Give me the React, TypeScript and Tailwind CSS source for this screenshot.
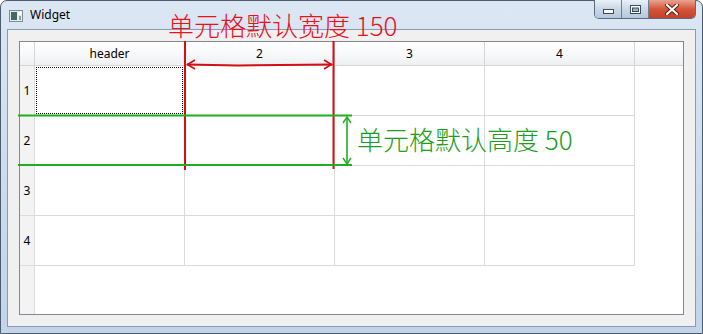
import React from 'react';

const COLS = ['header', '2', '3', '4'];
const ROWS = [1, 2, 3, 4];

const CJK = { fontFamily: '"Noto Sans CJK SC", "Noto Sans", sans-serif' };
const UI = { fontFamily: '"Noto Sans", "DejaVu Sans", sans-serif' };

function TitleIcon() {
  return (
    <svg width="14" height="12" viewBox="0 0 14 12" className="mt-[9px] ml-[8px]">
      <rect x="0.5" y="0.5" width="13" height="11" fill="#e9edf0" stroke="#7d8a96" />
      <rect x="2" y="2" width="6" height="8" fill="#3f6b60" />
      <rect x="9" y="2" width="3" height="3" fill="#ffffff" />
      <rect x="10" y="6" width="2" height="4" fill="#8fa19a" />
    </svg>
  );
}

function CaptionButtons() {
  return (
    <div className="ml-auto mr-[6px] flex h-[19px] -mt-[1px] rounded-b-[5px] border border-t-0 border-[#5a6a80] overflow-hidden">
      <div className="w-[27px] flex items-center justify-center bg-gradient-to-b from-[#eaf1f8] via-[#c9d7e6] to-[#b6c8dd] border-r border-[#6f7f93]">
        <svg width="11" height="5" viewBox="0 0 11 5" className="mt-[5px]">
          <rect x="0.5" y="0.5" width="10" height="4" fill="#ffffff" stroke="#3c4a5c" />
        </svg>
      </div>
      <div className="w-[27px] flex items-center justify-center bg-gradient-to-b from-[#eaf1f8] via-[#c9d7e6] to-[#b6c8dd] border-r border-[#6f7f93]">
        <svg width="11" height="9" viewBox="0 0 11 9">
          <rect x="0.5" y="0.5" width="10" height="8" fill="#ffffff" stroke="#3c4a5c" />
          <rect x="2.5" y="3" width="6" height="3.5" fill="#9fb2c8" stroke="#3c4a5c" />
        </svg>
      </div>
      <div className="w-[46px] flex items-center justify-center bg-gradient-to-b from-[#e9a391] via-[#d4553c] to-[#c63f27]">
        <svg width="14" height="11" viewBox="0 0 14 11">
          <path d="M2 1 L12 10 M12 1 L2 10" stroke="#5a1a10" strokeWidth="4" strokeLinecap="round" />
          <path d="M2 1 L12 10 M12 1 L2 10" stroke="#ffffff" strokeWidth="2.2" strokeLinecap="round" />
        </svg>
      </div>
    </div>
  );
}

function Table() {
  return (
    <div className="flex-1 flex flex-col border border-[#828790] bg-white overflow-hidden text-[12px] text-black" style={UI}>
      {/* column header */}
      <div className="flex h-[24px] shrink-0 bg-gradient-to-b from-white via-[#f8f9fa] to-[#eef0f2] border-b border-[#d5d5d5]">
        <div className="w-[15px] shrink-0 border-r border-[#d5d5d5]" />
        {COLS.map((c) => (
          <div key={c} className="w-[150px] shrink-0 border-r border-[#d5d5d5] flex items-center justify-center">
            {c}
          </div>
        ))}
        <div className="flex-1" />
      </div>

      <div className="flex flex-1">
        {/* row header */}
        <div className="w-[15px] shrink-0 bg-[#f3f3f3] border-r border-[#dcdcdc] flex flex-col">
          {ROWS.map((r) => (
            <div key={r} className="h-[50px] shrink-0 border-b border-[#dcdcdc] flex items-center justify-center">
              {r}
            </div>
          ))}
        </div>

        {/* cells */}
        <div className="flex flex-col">
          {ROWS.map((r) => (
            <div key={r} className="flex">
              {COLS.map((c, i) => (
                <div key={c} className="w-[150px] h-[50px] shrink-0 border-r border-b border-[#dadada] p-[1px]">
                  {r === 1 && i === 0 && <div className="h-full border border-dotted border-black" />}
                </div>
              ))}
            </div>
          ))}
        </div>
      </div>
    </div>
  );
}

function Annotations() {
  const red = '#d20f14';
  const green = '#1fae1f';
  return (
    <div className="absolute inset-0 pointer-events-none">
      <svg width="703" height="334" className="absolute inset-0">
        {/* width marks */}
        <path d="M185 41 L185 170" stroke={red} strokeWidth="2" />
        <path d="M333.5 41 L333.5 169" stroke={red} strokeWidth="2" />
        <path d="M187 64.5 L238 65.5 L332 64.5" stroke={red} strokeWidth="2" fill="none" />
        <path d="M195 60 L187.5 64.5 L195 69" stroke={red} strokeWidth="1.6" fill="none" />
        <path d="M324 60 L331.5 64.5 L324 69" stroke={red} strokeWidth="1.6" fill="none" />
        {/* height marks */}
        <path d="M18 115.5 L352 115.5" stroke={green} strokeWidth="2" />
        <path d="M18 165 L352 165" stroke={green} strokeWidth="2" />
        <path d="M347 117 L347 164" stroke={green} strokeWidth="1.6" />
        <path d="M343 123 L347 117 L351 123" stroke={green} strokeWidth="1.4" fill="none" />
        <path d="M343 158 L347 164 L351 158" stroke={green} strokeWidth="1.4" fill="none" />
      </svg>
      <span className="absolute left-[168px] top-[12px] text-[26px] leading-none font-light text-[#e8121a] whitespace-nowrap" style={CJK}>
        单元格默认宽度 150
      </span>
      <span className="absolute left-[357px] top-[126px] text-[26px] leading-none font-light text-[#1c9e1c] whitespace-nowrap" style={CJK}>
        单元格默认高度 50
      </span>
    </div>
  );
}

export default function App() {
  return (
    <div className="relative w-[703px] h-[334px] overflow-hidden bg-white">
      <div className="w-full h-full flex flex-col rounded-t-[7px] border border-[#4c5b6e] bg-gradient-to-b from-[#dce7f4] via-[#cddcee] to-[#c2d4ea]">
        {/* title bar */}
        <div className="h-[28px] shrink-0 flex items-start">
          <TitleIcon />
          <span className="ml-[7px] mt-[6px] text-[12px] leading-[16px] text-black" style={UI}>
            Widget
          </span>
          <CaptionButtons />
        </div>

        {/* client area */}
        <div className="flex-1 mx-[6px] mb-[6px] flex flex-col border border-[#8a9bb1] bg-[#f0f0f0] p-[11px]">
          <Table />
        </div>
      </div>
      <Annotations />
    </div>
  );
}
